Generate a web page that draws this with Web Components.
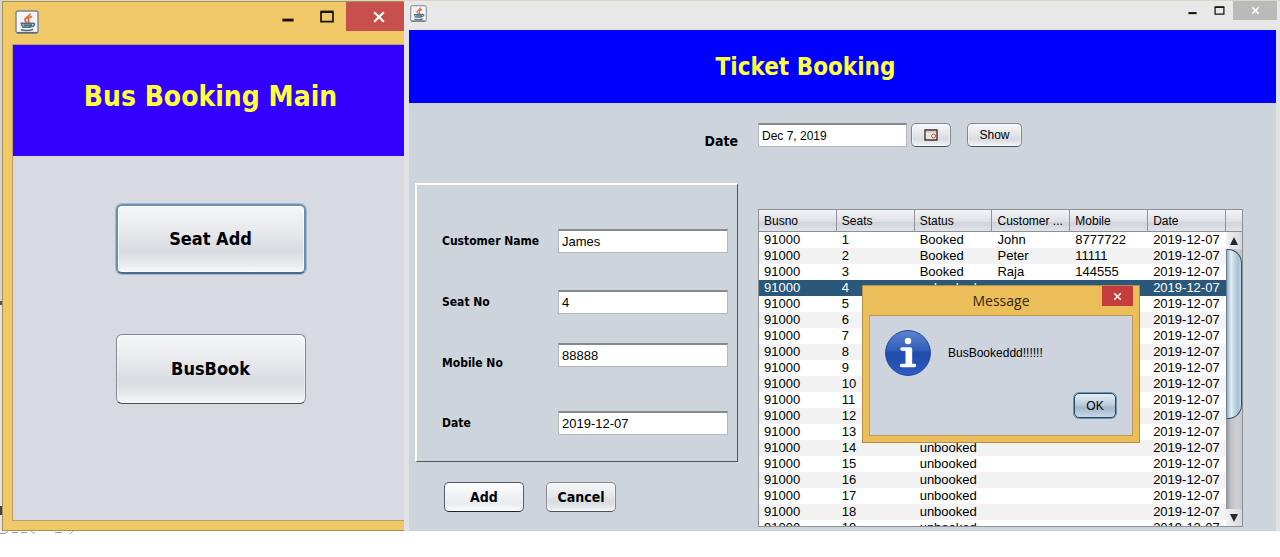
<!DOCTYPE html>
<html lang="en">
<head>
<meta charset="utf-8">
<title>Bus Booking</title>
<style>
  body { margin: 0; background: #fff; color: #000; font: 12px/16px "Liberation Sans", Arial, sans-serif;
    --bold: "DejaVu Sans Condensed", Tahoma, "Open Sans", sans-serif; }
</style>
</head>
<body>
<bus-desktop></bus-desktop>
<script>
const define = (name, html, setup) => {
  const template = document.createElement('template');
  template.innerHTML = html;
  customElements.define(name, class extends HTMLElement {
    constructor() {
      super();
      this.attachShadow({ mode: 'open' }).append(template.content.cloneNode(true));
    }
    connectedCallback() { if (setup) setup(this, this.shadowRoot); }
  });
};

define('java-icon', `
<style>:host { display: block; width: 24px; height: 24px } svg { display: block; width: 100%; height: 100% }</style>
<svg viewBox="0 0 24 24" fill="none" aria-hidden="true">
  <rect x="1" y="1" width="22" height="22" rx="2" fill="#f3f5f6" stroke="#7f878c" stroke-width="1.4"/>
  <path d="M2 22.6h20" stroke="#5d676e" stroke-width="1.4"/>
  <path d="M14.600 3.500c1.500 2.600-6 4.400-4.400 7 .5.8 1.300 1.400 1.500 1.900M17 6.200c-3 1.400-4.800 2.600-3.400 4.200.8 1 .1 1.800-.6 2.400" stroke="#df6b33" stroke-width="1.800"/>
  <path d="M5.500 13.400h11M6.500 13.700c.3 2.200 1 3.200 1.700 3.600h6.500c1-.8 1.400-2 1.600-3.600M16.600 13.400c4-1 4 2.400-.8 3.400M8.500 15.400h7" stroke="#4c6a82" stroke-width="1.600"/>
  <path d="M6 19.800c3 1 9 1 12-.2" stroke="#4c6a82" stroke-width="1.6"/>
</svg>`);

define('window-glyph', `
<style>:host { display: block } svg { display: block; width: 100%; height: 100% } g { display: none }
:host([kind=min]) .min, :host([kind=max]) .max, :host([kind=close]) .close { display: inline }</style>
<svg viewBox="0 0 16 16" fill="none" stroke="currentColor" aria-hidden="true">
  <g class="min"><path d="M2 11.8h12" stroke-width="3"/></g>
  <g class="max"><path d="M1.6 3v10.400h12.800V3" stroke-width="1.800"/><path d="M1 3h14" stroke-width="2.600"/></g>
  <g class="close"><path d="M3.200 3.200l9.600 9.600M12.800 3.200l-9.600 9.600" stroke-width="2.200"/></g>
</svg>`);

define('nimbus-button', `
<style>
  :host { display: block }
  button { box-sizing: border-box; width: 100%; height: 100%; margin: 0; padding: 0; display: flex; align-items: center; justify-content: center;
    font: inherit; color: #000; border: 1px solid #85898f; border-bottom-color: #4c5057; border-radius: var(--radius, 5px);
    background: linear-gradient(#f6f7f9, #e6e8ec 40%, #d8dbe0 68%, #e3e6ea 84%, #f6f8fb); box-shadow: inset 0 0 0 1px #ffffff70 }
  :host([focused]) button { border: 2px solid #6d8fac; border-bottom-color: #4f6c87; box-shadow: 0 0 0 1px #9cbad5, inset 0 0 0 1px #ffffffa0 }
  :host([bright]) button { background: linear-gradient(#fdfdfe, #eceff4 55%, #e8ebf0 75%, #fbfcff); border-color: #565b66; border-bottom-color: #20242e }
  :host([primary]) button { border: 1px solid #274866; box-shadow: 0 0 0 1px #7193af;
    background: linear-gradient(#e6eef5, #bccddb 45%, #a3b8ca 60%, #c7d9e8) }
</style>
<button type="button"><slot></slot></button>`);

define('window-frame', `
<style>
  :host { display: flex; flex-direction: column; box-sizing: border-box; min-width: 0; background: #f0c868 }
  header { display: flex; align-items: flex-start; flex: none; height: 42px }
  java-icon { margin: 8px auto 0 3px }
  button { display: flex; align-items: center; justify-content: center; border: 0; padding: 0; margin: 0; background: none; color: #16120a; width: 39px; height: 29px }
  button window-glyph { width: 16px; height: 15px }
  .close { width: 58px; background: #c7504c; color: #fff; padding-left: 8px }
  .close window-glyph { width: 16px; height: 16px }
  .body { flex: 1; display: flex; flex-direction: column; min-width: 0; border: 1px solid #b8a06c; border-right: 0; background: #d8dae2 }
  :host([theme=grey]) { background: #e8e8e8 }
  :host([theme=grey]) header { height: 29px; padding-right: 3px }
  :host([theme=grey]) java-icon { width: 17px; height: 17px; margin: 4px auto 0 6px }
  :host([theme=grey]) button { width: 27px; height: 19px }
  :host([theme=grey]) button window-glyph { width: 11px; height: 11px }
  :host([theme=grey]) .close { width: 44px; background: #bababa; padding: 0 }
  :host([theme=grey]) .body { border: 0; background: #e0e3e6 }
</style>
<header>
  <java-icon></java-icon>
  <button type="button" aria-label="Minimize"><window-glyph kind="min"></window-glyph></button>
  <button type="button" aria-label="Maximize"><window-glyph kind="max"></window-glyph></button>
  <button type="button" aria-label="Close" class="close"><window-glyph kind="close"></window-glyph></button>
</header>
<div class="body"><slot></slot></div>`);

define('page-banner', `
<style>
  :host { display: flex; align-items: center; justify-content: center; flex: none; color: #ffff3c }
  h1 { margin: 0; font: bold var(--title-size)/36px var(--bold) }
</style>
<h1><slot></slot></h1>`);

define('main-menu', `
<style>
  :host { display: block }
  page-banner { height: 111px; background: #3300ff; --title-size: 28px; padding: 0 0 8px 4px; box-sizing: border-box }
  nav { display: flex; flex-direction: column; align-items: center; gap: 60px; padding: 48px 0 0 4px; font: bold 18px/24px var(--bold) }
  nimbus-button { width: 190px; height: 70px; --radius: 6px }
</style>
<page-banner>Bus Booking Main</page-banner>
<nav><nimbus-button focused>Seat Add</nimbus-button><nimbus-button>BusBook</nimbus-button></nav>`);

const inputStyle = `
  input { box-sizing: border-box; height: 24px; margin: 0; padding: 0 3px; border: 1px solid #b4b8be; border-top: 2px solid #868a90; border-radius: 0;
    background: #fff; color: #000; font: 12px/16px "Liberation Sans", Arial, sans-serif; outline: 0; min-width: 0 }`;

define('form-field', `
<style>
  :host { display: flex; align-items: center; justify-content: space-between }
  label { font: bold 12px/16px var(--bold) }
  :host([low]) { align-items: flex-end; height: 28px }
  :host([low]) input { align-self: flex-start }
  ${inputStyle}
  input { width: 170px; font-size: 13px }
</style>
<label for="box"></label><input id="box" type="text">`, (host, root) => {
  root.querySelector('label').textContent = host.getAttribute('label');
  root.querySelector('input').value = host.getAttribute('value');
});

define('seat-table', `
<style>
  :host { display: flex; box-sizing: border-box; height: 318px; overflow: hidden; border: 1px solid #8b9097; background: #fff }
  .view { flex: 1; min-width: 0; overflow: hidden }
  table { width: 100%; table-layout: fixed; border-collapse: separate; border-spacing: 0 }
  th, td { box-sizing: border-box; padding: 0 0 0 5px; text-align: left; white-space: nowrap; overflow: hidden; font-weight: normal }
  th { height: 22px; border-right: 1px solid #8f949c; border-bottom: 1px solid #8b9097; background: linear-gradient(#f3f4f7, #dde0e6 55%, #cfd3da 60%, #e0e3e8) }
  td { height: 16px; font-size: 13px; line-height: 16px }
  tbody tr:nth-child(even) { background: #f2f2f2 }
  tbody tr.selected { background: #2b587a; color: #fff }
  .bar { flex: none; width: 16px; display: flex; flex-direction: column; background: linear-gradient(90deg, #8f9399, #bfc2c7 30%, #cdd0d5 70%, #c3c6cb) }
  .corner { flex: none; box-sizing: border-box; height: 22px; border-bottom: 1px solid #8b9097; background: linear-gradient(#f3f4f7, #dde0e6 55%, #cfd3da 60%, #e0e3e8) }
  .step { flex: none; height: 17px; display: flex; align-items: center; justify-content: center; background: linear-gradient(90deg, #f2f3f5, #d5d9de) }
  .thumb { height: 170px; box-sizing: border-box; border: 1px solid #3a4c5e; border-left-color: #6e8295; border-radius: 0 14px 14px 0;
    background: linear-gradient(90deg, #93aabd, #e6eff6 28%, #c0d5e3 55%, #a5c2d4 80%, #c3dae7) }
  .down { margin-top: auto }
  svg { width: 8px; height: 8px }
</style>
<div class="view"><table>
  <thead><tr><th scope="col">Busno</th><th scope="col">Seats</th><th scope="col">Status</th><th scope="col">Customer ...</th><th scope="col">Mobile</th><th scope="col">Date</th></tr></thead>
  <tbody></tbody>
</table></div>
<div class="bar">
  <div class="corner"></div>
  <div class="step"><svg viewBox="0 0 8 8"><path d="M4 0l4 8H0z" fill="#26292d"/></svg></div>
  <div class="thumb"></div>
  <div class="step down"><svg viewBox="0 0 8 8"><path d="M4 8l4-8H0z" fill="#26292d"/></svg></div>
</div>`, (host, root) => {
  const booked = [['John', '8777722'], ['Peter', '11111'], ['Raja', '144555']];
  const body = root.querySelector('tbody');
  for (let seat = 1; seat <= 19; seat++) {
    const row = body.insertRow();
    const [name, mobile] = booked[seat - 1] || ['', ''];
    if (seat === 4) row.className = 'selected';
    for (const text of ['91000', seat, name ? 'Booked' : 'unbooked', name, mobile, '2019-12-07']) row.insertCell().textContent = text;
  }
});

define('message-dialog', `
<style>
  :host { display: block; box-sizing: border-box; width: 278px; border: 1px solid #b48e42; background: #ecbe5a; padding: 0 6px 6px }
  header { display: grid; grid-template-columns: 31px 1fr 31px; height: 29px }
  h2 { grid-column: 2; margin: 0; text-align: center; font: 14px/29px "Open Sans", "Noto Sans", sans-serif; color: #33260c }
  .close { width: 31px; height: 20px; display: flex; align-items: center; justify-content: center; border: 0; padding: 0; background: #c43c3c; color: #fff }
  .close window-glyph { width: 11px; height: 11px }
  .body { border: 1px solid #bb9a58; background: #ced4de; padding: 14px 16px 17px 15px }
  .text { display: flex; align-items: center; gap: 17px }
  p { margin: 0 }
  .info { display: block; width: 46px; height: 46px }
  nimbus-button { width: 42px; height: 25px; margin: 17px 0 0 auto }
</style>
<header><h2>Message</h2><button class="close" type="button" aria-label="Close"><window-glyph kind="close"></window-glyph></button></header>
<div class="body">
  <div class="text">
    <svg class="info" viewBox="0 0 46 46" aria-hidden="true">
      <defs><linearGradient id="blue" x1="0" y1="0" x2="0" y2="1"><stop offset="0" stop-color="#5c85d0"/><stop offset=".45" stop-color="#2f5cb6"/><stop offset=".5" stop-color="#1f4aa8"/><stop offset="1" stop-color="#2c5cc4"/></linearGradient></defs>
      <circle cx="23" cy="23" r="22.400" fill="url(#blue)" stroke="#23459a"/>
      <circle cx="23" cy="11" r="3.200" fill="#fff"/>
      <path d="M17 19h8.500v16.500M16.500 35.500h13" fill="none" stroke="#fff" stroke-linecap="round" stroke-linejoin="round" stroke-width="3.400"/>
      <path d="M20.500 18h6v17h-6z" fill="#fff"/>
    </svg>
    <p>BusBookeddd!!!!!!</p>
  </div>
  <nimbus-button primary>OK</nimbus-button>
</div>`);

define('ticket-booking', `
<style>
  :host { display: block; flex: 1; margin: 0 4px 0 5px; background: #ced4db }
  page-banner { height: 73px; background: #0000ff; --title-size: 24px; padding-right: 74px }
  main { display: grid; grid-template-columns: 323px 1fr; grid-template-rows: 26px auto; column-gap: 20px; padding: 20px 33px 4px 6px }
  .date-label { justify-self: end; align-self: end; font: bold 14px/16px var(--bold) }
  .date-row { display: flex; height: 24px }
  ${inputStyle}
  .date-row input { width: 149px }
  .pick { width: 40px; margin: 0 16px 0 4px }
  .pick svg { display: block; width: 14px; height: 12px }
  .show { width: 55px }
  .left { margin-top: 34px }
  .panel { display: flex; flex-direction: column; box-sizing: border-box; height: 279px; padding: 44px 9px 0 25px;
    border: 2px solid #fff; border-right: 1px solid #50565e; border-bottom: 1px solid #50565e }
  .f2 { margin-top: 37px } .f3 { margin-top: 29px } .f4 { margin-top: 40px }
  .actions { display: flex; gap: 22px; margin: 20px 0 0 29px; font: bold 14px/18px var(--bold) }
  .actions nimbus-button { width: 70px; height: 30px }
  .actions .add { width: 80px }
  .right { position: relative; margin-top: 60px }
  message-dialog { position: absolute; left: 104px; top: 76px }
</style>
<page-banner>Ticket Booking</page-banner>
<main>
  <label class="date-label" for="date">Date</label>
  <div class="date-row">
    <input id="date" type="text" value="Dec 7, 2019">
    <nimbus-button class="pick"><svg viewBox="0 0 14 12" role="img" aria-label="Pick a date"><path d="M1 1h12v10H1z" fill="#fbf3ee" stroke="#3b2f2f" stroke-width="1.400"/><path d="M2 3h10" stroke="#c9a8a0"/><path d="M3 5v5M5 4v6" stroke="#e3cbc6"/><circle cx="9.500" cy="7" r="2" fill="none" stroke="#c23b3b"/></svg></nimbus-button>
    <nimbus-button class="show">Show</nimbus-button>
  </div>
  <div class="left">
    <div class="panel">
      <form-field label="Customer Name" value="James"></form-field>
      <form-field class="f2" label="Seat No" value="4"></form-field>
      <form-field class="f3" low label="Mobile No" value="88888"></form-field>
      <form-field class="f4" label="Date" value="2019-12-07"></form-field>
    </div>
    <div class="actions"><nimbus-button class="add" bright>Add</nimbus-button><nimbus-button>Cancel</nimbus-button></div>
  </div>
  <div class="right">
    <seat-table></seat-table>
    <message-dialog></message-dialog>
  </div>
</main>`);

define('bus-desktop', `
<style>
  :host { display: grid; grid-template-columns: 2px 402px 1fr; padding-top: 1px; background: linear-gradient(#d9d6c8 1px, #0000 1px) }
  .edge { background: linear-gradient(#d4d4cc 300px, #555 300px 304px, #e4e4e4 304px 505px, #444 505px 514px, #e4e4e4 514px) }
  .main { border: solid #a89055; border-width: 1px 0 1px 1px; padding: 0 0 9px 9px }
  .scraps { display: block; grid-column: 1 / 3; width: 76px; height: 5px }
  .ticket { grid-column: 3 }
</style>
<div class="edge"></div>
<window-frame class="main"><main-menu></main-menu></window-frame>
<window-frame class="ticket" theme="grey"><ticket-booking></ticket-booking></window-frame>
<svg class="scraps" viewBox="0 0 76 5" fill="none" stroke="#9b9b9b" aria-hidden="true"><path d="M0 2.500h5l3-2M12 1.500h6M21 1.500h6M31 .5l4 2M55 1.500h7M73 0l-3 3"/></svg>`);
</script>
</body>
</html>
